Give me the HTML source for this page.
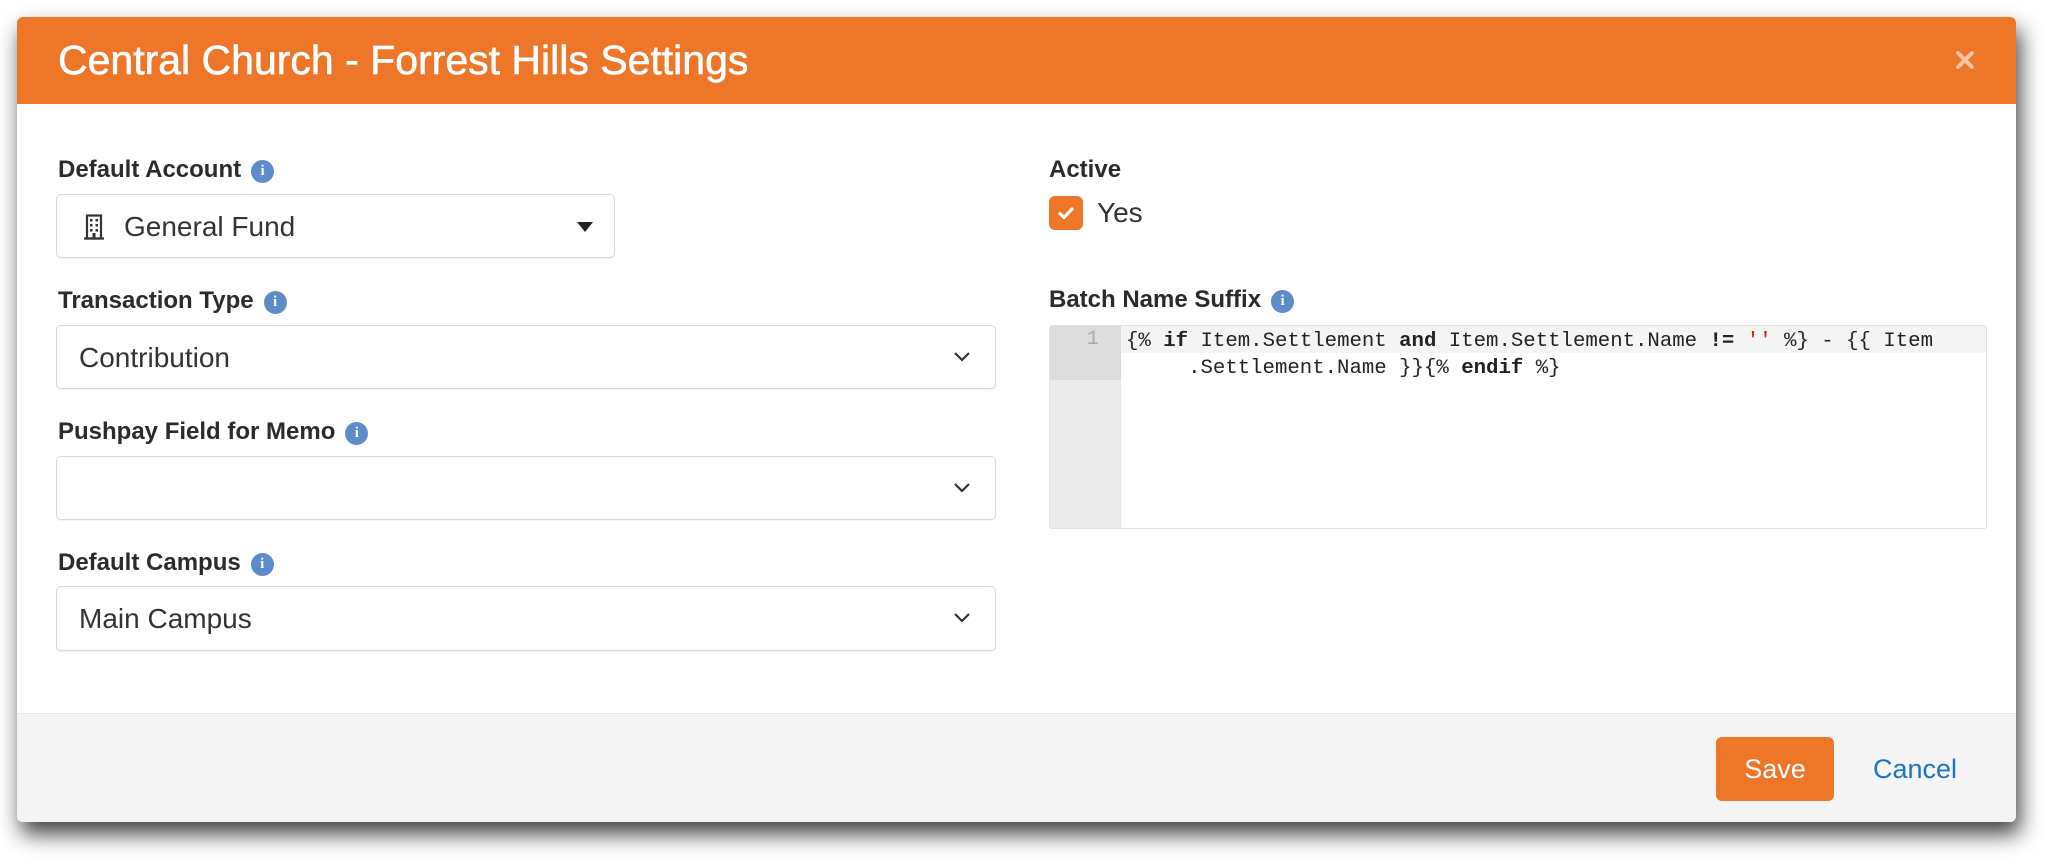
<!DOCTYPE html>
<html><head><meta charset="utf-8"><style>
*{box-sizing:border-box;margin:0;padding:0}
body{width:2053px;height:861px;background:#fff;position:relative;overflow:hidden;font-family:"Liberation Sans",sans-serif;color:#2b2b2b}
.modal{position:absolute;left:17px;top:17px;width:1999px;height:805px;background:#fff;border-radius:6px;box-shadow:4px 12px 22px rgba(0,0,0,.75);overflow:hidden}
.hdr{position:absolute;left:0;top:0;width:100%;height:87px;background:#ee7629;color:#fff}
.hdr h1{position:absolute;left:41px;top:19px;font-size:41px;font-weight:normal;line-height:48px;-webkit-text-stroke:0.6px #fff}
.x{position:absolute;left:1936px;top:31px;width:24px;height:24px}
.lbl{position:absolute;font-size:24px;font-weight:bold;color:#2b2b2b;line-height:28px;white-space:nowrap}
.info{display:inline-block;width:23px;height:23px;border-radius:50%;background:#5d8ccb;color:#fff;font-size:15px;font-weight:bold;text-align:center;line-height:23px;vertical-align:2px;margin-left:10px;font-family:"Liberation Serif",serif}
.sel{position:absolute;border:1px solid #d8d8d8;border-radius:5px;background:#fff;box-shadow:0 1px 1px rgba(0,0,0,.05)}
.sel span{position:absolute;left:22px;top:16px;font-size:28px;line-height:32px;color:#333}
.chev{position:absolute;right:24px;top:24px}
.foot{position:absolute;left:0;top:696px;width:100%;height:109px;background:#f4f4f4;border-top:1px solid #e6e6e6}
.save{position:absolute;left:1699px;top:23px;width:118px;height:64px;background:#ee7629;border-radius:6px;color:#fff;font-size:27px;text-align:center;line-height:64px}
.cancel{position:absolute;left:1856px;top:40px;font-size:27px;color:#1d72c9;line-height:30px}
.code{position:absolute;left:1032px;top:308px;width:938px;height:204px;border:1px solid #e2e2e2;border-radius:3px;background:#fff;overflow:hidden;font-family:"Liberation Mono",monospace;font-size:20.7px}
.gut{position:absolute;left:0;top:0;width:71px;height:100%;background:#ebebeb}
.gact{position:absolute;left:0;top:0;width:71px;height:54px;background:#dcdcdc}
.lact{position:absolute;left:71px;top:0;right:0;height:27px;background:#f4f4f4}
.ln{position:absolute;left:0;width:49px;text-align:right;top:2px;color:#aaa;line-height:24px}
.ct{position:absolute;left:76px;top:2px;line-height:27px;white-space:pre;color:#222}
b{font-weight:bold}
</style></head><body>
<div class="modal">
 <div class="hdr"><h1>Central Church - Forrest Hills Settings</h1>
  <svg class="x" viewBox="0 0 24 24"><path d="M5 5L19 19M19 5L5 19" stroke="#f8c5a3" stroke-width="4" stroke-linecap="round"/></svg></div>

 <div class="lbl" style="left:41px;top:139px">Default Account<span class="info">i</span></div>
 <div class="sel" style="left:39px;top:177px;width:559px;height:64px">
  <svg style="position:absolute;left:27px;top:19px" width="20" height="26" viewBox="0 0 20 26"><rect x="3" y="1.5" width="14" height="23" fill="none" stroke="#333" stroke-width="2.2"/><path d="M0 24.5H20" stroke="#333" stroke-width="2.2"/><g fill="#333"><rect x="6" y="5" width="2.5" height="2.5"/><rect x="11.5" y="5" width="2.5" height="2.5"/><rect x="6" y="10" width="2.5" height="2.5"/><rect x="11.5" y="10" width="2.5" height="2.5"/><rect x="6" y="15" width="2.5" height="2.5"/><rect x="11.5" y="15" width="2.5" height="2.5"/><rect x="8.5" y="19" width="3" height="5"/></g></svg>
  <span style="left:67px">General Fund</span>
  <svg style="position:absolute;left:520px;top:27px" width="16" height="10"><path d="M0 0H16L8 10Z" fill="#222"/></svg>
 </div>

 <div class="lbl" style="left:41px;top:270px">Transaction Type<span class="info">i</span></div>
 <div class="sel" style="left:39px;top:308px;width:940px;height:64px"><span>Contribution</span>
  <svg class="chev" width="18" height="14" viewBox="0 0 18 14"><path d="M2 3L9 10L16 3" fill="none" stroke="#333" stroke-width="2.2"/></svg></div>

 <div class="lbl" style="left:41px;top:401px">Pushpay Field for Memo<span class="info">i</span></div>
 <div class="sel" style="left:39px;top:439px;width:940px;height:64px">
  <svg class="chev" width="18" height="14" viewBox="0 0 18 14"><path d="M2 3L9 10L16 3" fill="none" stroke="#333" stroke-width="2.2"/></svg></div>

 <div class="lbl" style="left:41px;top:532px">Default Campus<span class="info">i</span></div>
 <div class="sel" style="left:39px;top:569px;width:940px;height:65px"><span>Main Campus</span>
  <svg class="chev" width="18" height="14" viewBox="0 0 18 14"><path d="M2 3L9 10L16 3" fill="none" stroke="#333" stroke-width="2.2"/></svg></div>

 <div class="lbl" style="left:1032px;top:139px">Active</div>
 <div style="position:absolute;left:1032px;top:179px;width:34px;height:34px;border-radius:6px;background:#ee7629">
  <svg width="34" height="34" viewBox="0 0 34 34"><path d="M11 17.5L15 21.5L23 13" fill="none" stroke="#fff" stroke-width="3.2" stroke-linecap="round" stroke-linejoin="round"/></svg></div>
 <div style="position:absolute;left:1080px;top:180px;font-size:28px;line-height:32px;color:#333">Yes</div>

 <div class="lbl" style="left:1032px;top:269px">Batch Name Suffix<span class="info">i</span></div>
 <div class="code"><div class="gut"></div><div class="gact"></div><div class="lact"></div>
  <div class="ln">1</div>
  <div class="ct">{% <b>if</b> Item.Settlement <b>and</b> Item.Settlement.Name <b>!=</b> <span style="color:#d11">''</span> %} - {{ Item
     .Settlement.Name }}{% <b>endif</b> %}</div></div>

 <div class="foot"><div class="save">Save</div><div class="cancel">Cancel</div></div>
</div>
</body></html>
